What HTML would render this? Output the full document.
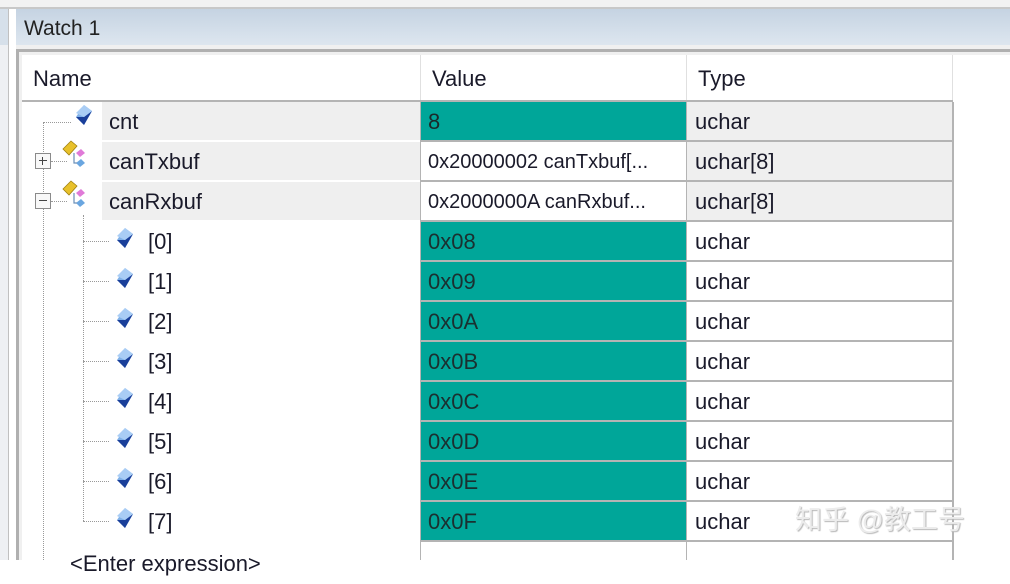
<!DOCTYPE html>
<html><head><meta charset="utf-8"><style>
*{margin:0;padding:0;box-sizing:border-box}
body{width:1010px;height:560px;overflow:hidden;background:#fff;position:relative;font-family:"Liberation Sans","DejaVu Sans",sans-serif;font-size:22px;color:#1a1a2a}
.a{position:absolute}
.t{position:absolute;line-height:40px;white-space:nowrap}
.vd{position:absolute;border-left:1px dotted #999}
.hd{position:absolute;border-top:1px dotted #999}
</style></head><body>
<div class="a" style="left:0;top:0;width:1010px;height:9px;background:#f2f2f2;border-bottom:2px solid #c8c8c8"></div>
<div class="a" style="left:0;top:9px;width:9px;height:551px;background:#eef0f3;border-right:1px solid #c0c0c0"></div>
<div class="a" style="left:0;top:9px;width:8px;height:36px;background:#d6e0ea"></div>
<div class="a" style="left:16px;top:9px;width:994px;height:36px;background:linear-gradient(#c5d3e2,#dde6ef)"></div>
<div class="t" style="left:24px;top:10px;line-height:38px;font-size:21px;color:#222">Watch 1</div>
<div class="a" style="left:16px;top:45px;width:994px;height:515px;background:#f0f0f0"></div>
<div class="a" style="left:16px;top:49px;width:994px;height:3px;background:#b0b0b0"></div>
<div class="a" style="left:16px;top:49px;width:3px;height:511px;background:#b0b0b0"></div>
<div class="a" style="left:22px;top:55px;width:988px;height:505px;background:#fff"></div>
<div class="a" style="left:420px;top:55px;width:1px;height:46px;background:#e0e0e0"></div>
<div class="a" style="left:686px;top:55px;width:1px;height:46px;background:#e0e0e0"></div>
<div class="a" style="left:952px;top:55px;width:1px;height:46px;background:#e0e0e0"></div>
<div class="t" style="left:33px;top:59px">Name</div>
<div class="t" style="left:432px;top:59px">Value</div>
<div class="t" style="left:698px;top:59px">Type</div>
<div class="a" style="left:22px;top:100px;width:931px;height:2px;background:#b4b4b4"></div>

<div class="a" style="left:102px;top:102px;width:318px;height:118px;background:#efefef"></div>
<div class="a" style="left:421px;top:102px;width:265px;height:38px;background:#00a699"></div>
<div class="a" style="left:421px;top:142px;width:265px;height:78px;background:#fff"></div>
<div class="a" style="left:687px;top:102px;width:265px;height:118px;background:#efefef"></div>
<div class="a" style="left:421px;top:222px;width:265px;height:318px;background:#00a699"></div>
<div class="a" style="left:102px;top:140px;width:318px;height:2px;background:#fff"></div>
<div class="a" style="left:102px;top:180px;width:318px;height:2px;background:#fff"></div>
<div class="a" style="left:420px;top:102px;width:1px;height:458px;background:#b4b4b4"></div>
<div class="a" style="left:686px;top:102px;width:1px;height:458px;background:#b4b4b4"></div>
<div class="a" style="left:952px;top:102px;width:2px;height:458px;background:#b4b4b4"></div>
<div class="a" style="left:421px;top:140px;width:533px;height:2px;background:#b4b4b4"></div>
<div class="a" style="left:421px;top:180px;width:533px;height:2px;background:#b4b4b4"></div>
<div class="a" style="left:421px;top:220px;width:533px;height:2px;background:#b4b4b4"></div>
<div class="a" style="left:421px;top:260px;width:533px;height:2px;background:#b4b4b4"></div>
<div class="a" style="left:421px;top:300px;width:533px;height:2px;background:#b4b4b4"></div>
<div class="a" style="left:421px;top:340px;width:533px;height:2px;background:#b4b4b4"></div>
<div class="a" style="left:421px;top:380px;width:533px;height:2px;background:#b4b4b4"></div>
<div class="a" style="left:421px;top:420px;width:533px;height:2px;background:#b4b4b4"></div>
<div class="a" style="left:421px;top:460px;width:533px;height:2px;background:#b4b4b4"></div>
<div class="a" style="left:421px;top:500px;width:533px;height:2px;background:#b4b4b4"></div>
<div class="a" style="left:421px;top:540px;width:533px;height:2px;background:#b4b4b4"></div>

<div class="vd" style="left:43px;top:122px;height:438px"></div>
<div class="hd" style="left:43px;top:122px;width:28px"></div>
<div class="hd" style="left:51px;top:161px;width:16px"></div>
<div class="hd" style="left:51px;top:201px;width:16px"></div>
<div class="vd" style="left:83px;top:215px;height:306px"></div>
<div class="hd" style="left:83px;top:241px;width:26px"></div>
<div class="hd" style="left:83px;top:281px;width:26px"></div>
<div class="hd" style="left:83px;top:321px;width:26px"></div>
<div class="hd" style="left:83px;top:361px;width:26px"></div>
<div class="hd" style="left:83px;top:401px;width:26px"></div>
<div class="hd" style="left:83px;top:441px;width:26px"></div>
<div class="hd" style="left:83px;top:481px;width:26px"></div>
<div class="hd" style="left:83px;top:521px;width:26px"></div>
<div class="a" style="left:35px;top:153px;width:16px;height:16px;border:1px solid #8a8a8a;background:#f8f8f8"><div class="a" style="left:3px;top:6px;width:8px;height:1px;background:#444"></div><div class="a" style="left:6px;top:3px;width:1px;height:8px;background:#444"></div></div>
<div class="a" style="left:35px;top:193px;width:16px;height:16px;border:1px solid #8a8a8a;background:#f8f8f8"><div class="a" style="left:3px;top:6px;width:8px;height:1px;background:#444"></div></div>

<svg class="a" style="left:0;top:0" width="1010" height="560">
<defs>
<g id="d"><path d="M8 0 L16 6 L8 20 L0 12 Z" fill="#7fb0e8"/><path d="M0 12 L8 20 L16 6 L8 12 Z" fill="#1a3f9a"/><path d="M8 0 L16 6 L8 12 L0 8 Z" fill="#a9cdf5"/></g>
<g id="s"><path d="M0 8 L8 0 L14 5 L6 14 Z" fill="#e8c12a" stroke="#a08010" stroke-width=".8"/><path d="M13 12 L18 8 L22 12 L17 16Z" fill="#e07ad8"/><path d="M13 22 L18 18 L22 22 L17 26Z" fill="#6aa6e0"/><path d="M11 12 V22 H14" fill="none" stroke="#6a8fb8" stroke-width="1.2"/></g>
</defs>
<use href="#d" x="76" y="105"/>
<use href="#s" x="63" y="141"/>
<use href="#s" x="63" y="181"/>
<use href="#d" x="117" y="228"/>
<use href="#d" x="117" y="268"/>
<use href="#d" x="117" y="308"/>
<use href="#d" x="117" y="348"/>
<use href="#d" x="117" y="388"/>
<use href="#d" x="117" y="428"/>
<use href="#d" x="117" y="468"/>
<use href="#d" x="117" y="508"/>
</svg>

<div class="t" style="left:109px;top:102px">cnt</div>
<div class="t" style="left:109px;top:142px">canTxbuf</div>
<div class="t" style="left:109px;top:182px">canRxbuf</div>
<div class="t" style="left:148px;top:222px">[0]</div>
<div class="t" style="left:148px;top:262px">[1]</div>
<div class="t" style="left:148px;top:302px">[2]</div>
<div class="t" style="left:148px;top:342px">[3]</div>
<div class="t" style="left:148px;top:382px">[4]</div>
<div class="t" style="left:148px;top:422px">[5]</div>
<div class="t" style="left:148px;top:462px">[6]</div>
<div class="t" style="left:148px;top:502px">[7]</div>
<div class="t" style="left:70px;top:544px">&lt;Enter expression&gt;</div>

<div class="t" style="left:428px;top:102px;color:#1a2a2a">8</div>
<div class="t" style="left:428px;top:142px;font-size:20px">0x20000002 canTxbuf[...</div>
<div class="t" style="left:428px;top:182px;font-size:20px">0x2000000A canRxbuf...</div>
<div class="t" style="left:428px;top:222px;color:#1a3030">0x08</div>
<div class="t" style="left:428px;top:262px;color:#1a3030">0x09</div>
<div class="t" style="left:428px;top:302px;color:#1a3030">0x0A</div>
<div class="t" style="left:428px;top:342px;color:#1a3030">0x0B</div>
<div class="t" style="left:428px;top:382px;color:#1a3030">0x0C</div>
<div class="t" style="left:428px;top:422px;color:#1a3030">0x0D</div>
<div class="t" style="left:428px;top:462px;color:#1a3030">0x0E</div>
<div class="t" style="left:428px;top:502px;color:#1a3030">0x0F</div>

<div class="t" style="left:695px;top:102px">uchar</div>
<div class="t" style="left:695px;top:142px">uchar[8]</div>
<div class="t" style="left:695px;top:182px">uchar[8]</div>
<div class="t" style="left:695px;top:222px">uchar</div>
<div class="t" style="left:695px;top:262px">uchar</div>
<div class="t" style="left:695px;top:302px">uchar</div>
<div class="t" style="left:695px;top:342px">uchar</div>
<div class="t" style="left:695px;top:382px">uchar</div>
<div class="t" style="left:695px;top:422px">uchar</div>
<div class="t" style="left:695px;top:462px">uchar</div>
<div class="t" style="left:695px;top:502px">uchar</div>

<div class="t" style="left:795px;top:500px;font-family:'Liberation Sans','Noto Sans CJK SC',sans-serif;font-size:27px;color:#ececec;text-shadow:1px 1px 1px #b8b8b8">知乎 @教工号</div>
</body></html>
